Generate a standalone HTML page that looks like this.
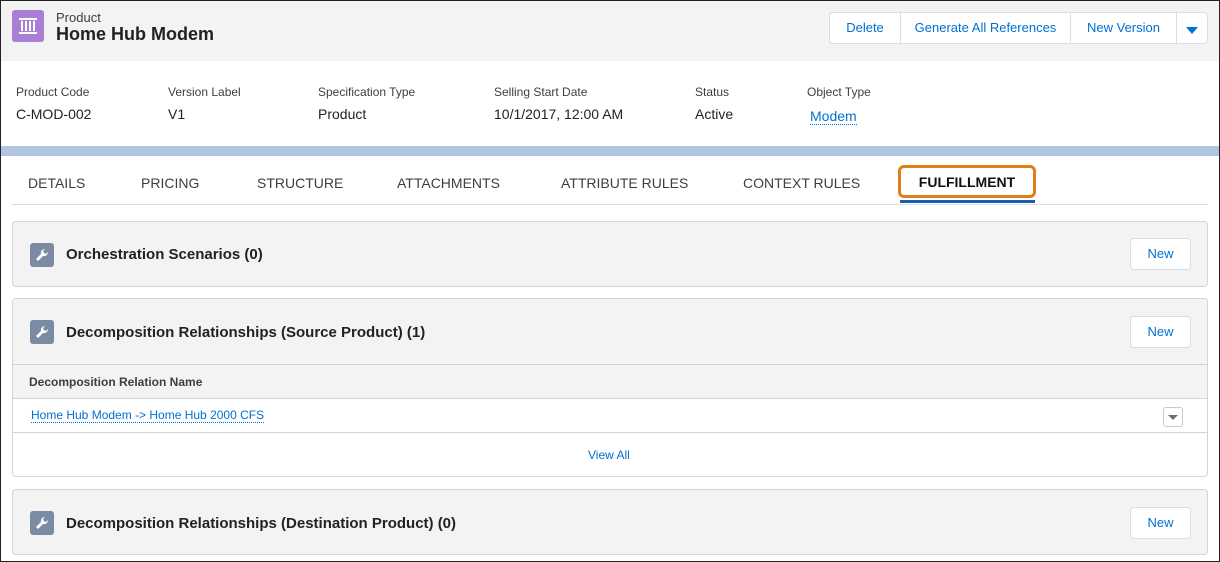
<!DOCTYPE html>
<html><head><style>
*{box-sizing:border-box;margin:0;padding:0}
body{width:1220px;height:562px;overflow:hidden;font-family:"Liberation Sans",sans-serif;background:#fff;position:relative;color:#16325c}
.frame{position:absolute;inset:0;border:1px solid #222;pointer-events:none;z-index:9}
.hdr{position:absolute;left:0;top:0;width:1220px;height:61px;background:#f3f3f3}
.ico{position:absolute;left:12px;top:10px;width:32px;height:32px;background:#a97fd6;border-radius:3px}
.abs{position:absolute;white-space:nowrap}
.btns{position:absolute;left:829px;top:12px;height:32px;display:flex;border:1px solid #d8dde6;border-radius:4px;background:#fff}
.btns div{height:30px;line-height:30px;font-size:13px;color:#0070d2;text-align:center;border-right:1px solid #d8dde6}
.btns div:last-child{border-right:none}
.lbl{font-size:12px;color:#3e3e3c}
.val{font-size:14px;color:#222}
.band{position:absolute;left:0;top:146px;width:1220px;height:10px;background:#b1c5e0}
.tab{position:absolute;top:175px;font-size:14px;color:#3e3e3c}
.card{position:absolute;left:12px;width:1196px;border:1px solid #d4d4d4;border-radius:4px;background:#f3f3f3;overflow:hidden}
.wr{position:absolute;left:17px;width:24px;height:24px;background:#7b8ba3;border-radius:3px}
.ct{position:absolute;left:53px;font-size:15px;font-weight:bold;color:#222}
.nb{position:absolute;right:16px;width:61px;height:32px;border:1px solid #d8dde6;border-radius:4px;background:#fff;color:#0070d2;font-size:13px;text-align:center;line-height:30px}
</style></head><body>
<div class="hdr"></div>
<div class="ico"><svg width="32" height="32" viewBox="0 0 32 32"><rect x="7" y="8" width="18" height="2" fill="#fff"/><rect x="7" y="22" width="18" height="2" fill="#fff"/><rect x="9" y="11" width="2" height="10" fill="#fff"/><rect x="13" y="11" width="2" height="10" fill="#fff"/><rect x="17" y="11" width="2" height="10" fill="#fff"/><rect x="21" y="11" width="2" height="10" fill="#fff"/></svg></div>
<div class="abs" style="left:56px;top:10px;font-size:13px;color:#3e3e3c">Product</div>
<div class="abs" style="left:56px;top:24px;font-size:18px;font-weight:bold;color:#222">Home Hub Modem</div>
<div class="btns"><div style="width:71px">Delete</div><div style="width:170px">Generate All References</div><div style="width:106px">New Version</div><div style="width:30px"><svg width="30" height="30"><path d="M9 14h12l-6 7z" fill="#0070d2"/></svg></div></div>

<div class="abs lbl" style="left:16px;top:85px">Product Code</div><div class="abs val" style="left:16px;top:106px">C-MOD-002</div>
<div class="abs lbl" style="left:168px;top:85px">Version Label</div><div class="abs val" style="left:168px;top:106px">V1</div>
<div class="abs lbl" style="left:318px;top:85px">Specification Type</div><div class="abs val" style="left:318px;top:106px">Product</div>
<div class="abs lbl" style="left:494px;top:85px">Selling Start Date</div><div class="abs val" style="left:494px;top:106px">10/1/2017, 12:00 AM</div>
<div class="abs lbl" style="left:695px;top:85px">Status</div><div class="abs val" style="left:695px;top:106px">Active</div>
<div class="abs lbl" style="left:807px;top:85px">Object Type</div><div class="abs val" style="left:810px;top:108px;color:#0070d2;border-bottom:1px dotted #0070d2">Modem</div>
<div class="band"></div>
<div class="tab" style="left:28px">DETAILS</div>
<div class="tab" style="left:141px">PRICING</div>
<div class="tab" style="left:257px">STRUCTURE</div>
<div class="tab" style="left:397px">ATTACHMENTS</div>
<div class="tab" style="left:561px">ATTRIBUTE RULES</div>
<div class="tab" style="left:743px">CONTEXT RULES</div>
<div class="abs" style="left:12px;top:204px;width:1196px;height:1px;background:#dddbda"></div>
<div class="abs" style="left:900px;top:200px;width:135px;height:3px;background:#1b5fb0"></div>
<div class="abs" style="left:898px;top:165px;width:138px;height:33px;border:3px solid #e07f18;border-radius:6px;background:#fff;font-size:14px;font-weight:bold;color:#111;text-align:center;line-height:29px">FULFILLMENT</div>

<div class="card" style="top:221px;height:66px"><div class="wr" style="top:21px"><svg width="24" height="24"><path d="M15 6a4 4 0 0 0-4 5l-5 5 2 2 5-5a4 4 0 0 0 5-4l-2 2-2-1-1-2z" fill="#fff"/></svg></div><div class="ct" style="top:24px">Orchestration Scenarios (0)</div><div class="nb" style="top:16px">New</div></div>

<div class="card" style="top:298px;height:179px;background:#fff">
<div style="position:absolute;left:0;top:0;width:100%;height:66px;background:#f3f3f3;border-bottom:1px solid #d4d4d4"></div>
<div class="wr" style="top:21px"><svg width="24" height="24"><path d="M15 6a4 4 0 0 0-4 5l-5 5 2 2 5-5a4 4 0 0 0 5-4l-2 2-2-1-1-2z" fill="#fff"/></svg></div><div class="ct" style="top:25px">Decomposition Relationships (Source Product) (1)</div><div class="nb" style="top:17px">New</div>
<div style="position:absolute;left:0;top:66px;width:100%;height:34px;background:#f3f3f3;border-bottom:1px solid #d4d4d4"></div>
<div class="abs" style="left:16px;top:76px;font-size:12px;font-weight:bold;color:#3e3e3c">Decomposition Relation Name</div>
<div class="abs" style="left:18px;top:109px;font-size:12px;color:#0070d2;border-bottom:1px dotted #0070d2">Home Hub Modem -&gt; Home Hub 2000 CFS</div>
<div class="abs" style="left:1150px;top:108px;width:20px;height:20px;border:1px solid #c9c9c9;border-radius:3px"><svg width="18" height="18"><path d="M4 7h10l-5 5z" fill="#706e6b"/></svg></div>
<div style="position:absolute;left:0;top:133px;width:100%;height:1px;background:#d4d4d4"></div>
<div class="abs" style="left:575px;top:149px;font-size:12px;color:#0070d2">View All</div>
</div>

<div class="card" style="top:489px;height:66px"><div class="wr" style="top:21px"><svg width="24" height="24"><path d="M15 6a4 4 0 0 0-4 5l-5 5 2 2 5-5a4 4 0 0 0 5-4l-2 2-2-1-1-2z" fill="#fff"/></svg></div><div class="ct" style="top:25px">Decomposition Relationships (Destination Product) (0)</div><div class="nb" style="top:17px">New</div></div>
<div class="frame"></div>
</body></html>
